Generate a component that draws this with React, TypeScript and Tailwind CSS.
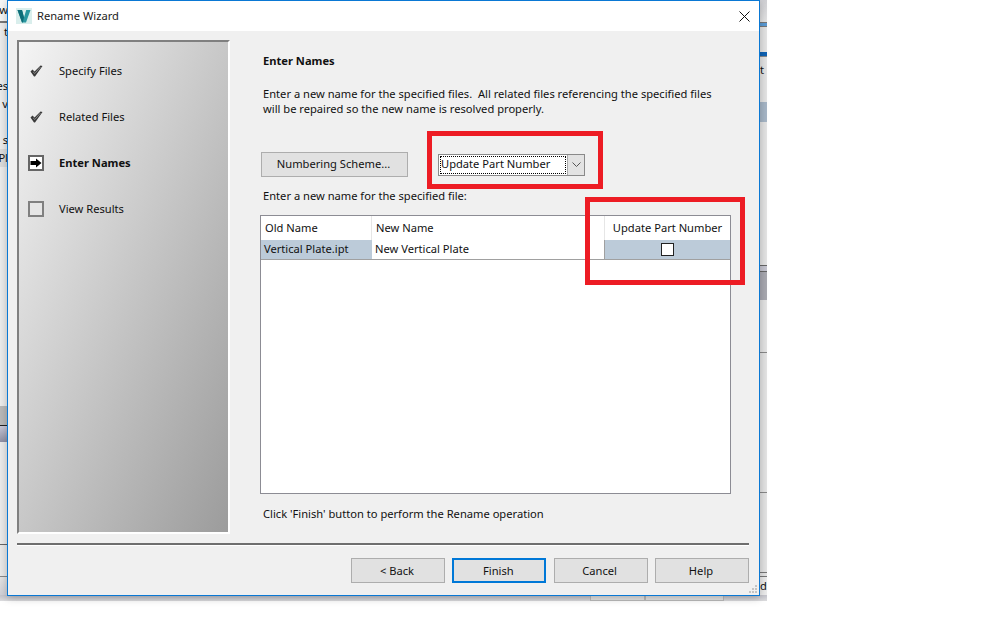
import React from "react";

const font = { fontFamily: '"Noto Sans", "Open Sans", sans-serif' };

function Check() {
  return (
    <svg width="13" height="12" viewBox="0 0 13 12" className="shrink-0">
      <path d="M0.5 6.5 L2.5 4.5 L4.5 6.5 L10.5 0.5 L12.5 1 L5 11.5 L4 11.5 Z" fill="#3a3a3a" />
      <path d="M3 6.8 L4.8 8.5 L10.5 2" fill="none" stroke="#9a9a9a" strokeWidth="0.8" />
    </svg>
  );
}

function Step({ icon, label, bold }: { icon: React.ReactNode; label: string; bold?: boolean }) {
  return (
    <div className="flex items-center h-[46px]">
      <div className="w-[16px] ml-[9px] flex justify-center">{icon}</div>
      <span className={"ml-[15px] text-[#111] " + (bold ? "font-bold" : "")}>{label}</span>
    </div>
  );
}

function Btn({ label, focus }: { label: string; focus?: boolean }) {
  return (
    <div
      className={
        "flex items-center justify-center w-[94px] h-[25px] pr-[2px] pt-[1px] text-[#111] bg-[#e1e1e1] " +
        (focus ? "border-2 border-[#0078d7]" : "border border-[#adadad]")
      }
    >
      {label}
    </div>
  );
}

function Strip({ h, bg, text }: { h: string; bg: string; text?: string }) {
  return (
    <div className={"flex justify-end items-center overflow-hidden whitespace-nowrap shrink-0 " + h + " " + bg}>
      {text}
    </div>
  );
}

function RightStrip({ h, bg, text }: { h: string; bg: string; text?: string }) {
  return (
    <div className={"flex items-center overflow-hidden whitespace-nowrap shrink-0 " + h + " " + bg}>
      {text}
    </div>
  );
}

export default function App() {
  return (
    <div className="relative w-[1008px] h-[630px] bg-white overflow-hidden text-[11.15px] text-[#111]" style={font}>
      {/* Application behind the dialog */}
      <div className="w-[767px] h-[601px] flex flex-col bg-[#e9e9e9]">
        <div className="flex justify-between h-[595px]">
          <div className="w-[8px] flex flex-col">
            <Strip h="h-[21px]" bg="bg-[#f6f6f6]" text="w" />
            <Strip h="h-[2px]" bg="bg-[#777]" />
            <Strip h="h-[18px]" bg="bg-[#ececec]" text="t" />
            <Strip h="h-[36px]" bg="bg-[#ececec]" />
            <Strip h="h-[18px]" bg="bg-[#ececec]" text="es" />
            <Strip h="h-[18px]" bg="bg-[#ececec]" text="v" />
            <Strip h="h-[18px]" bg="bg-[#ececec]" />
            <Strip h="h-[18px]" bg="bg-[#ececec]" text="s" />
            <Strip h="h-[18px]" bg="bg-[#dcdcdc]" text="Pl" />
            <Strip h="h-[239px]" bg="bg-[#ececec]" />
            <Strip h="h-[19px]" bg="bg-[#b9b9b9]" />
            <Strip h="h-[1px]" bg="bg-[#222]" />
            <Strip h="h-[16px]" bg="bg-linear-to-b from-[#c8c8d8] to-[#8f8fa4]" />
            <Strip h="h-[102px]" bg="bg-[#ebebeb]" />
            <Strip h="h-[1px]" bg="bg-[#666]" />
            <Strip h="h-[31px]" bg="bg-[#e9e9e9]" />
            <Strip h="h-[1px]" bg="bg-[#888]" />
            <Strip h="h-[19px]" bg="bg-linear-to-b from-[#e4e4e4] to-[#cfcfd6]" />
          </div>
          <div className="w-[7px] flex flex-col">
            <RightStrip h="h-[22px]" bg="bg-linear-to-b from-[#d0d0d4] to-[#e4e4e4]" />
            <RightStrip h="h-[5px]" bg="bg-[#5b9bd5] border-y border-[#777]" />
            <RightStrip h="h-[25px]" bg="bg-[#e4e4e4]" />
            <RightStrip h="h-[5px]" bg="bg-[#0f62b4] border-b border-[#888]" />
            <RightStrip h="h-[4px]" bg="bg-[#e4e4e4]" />
            <RightStrip h="h-[18px]" bg="bg-[#e4e4e4]" text="t" />
            <RightStrip h="h-[23px]" bg="bg-[#e4e4e4]" />
            <RightStrip h="h-[20px]" bg="bg-[#a6b6c6]" />
            <RightStrip h="h-[143px]" bg="bg-[#e4e4e4]" />
            <RightStrip h="h-[7px]" bg="bg-[#c5c5d0] border-y border-[#666]" />
            <RightStrip h="h-[28px]" bg="bg-[#a8a8b0]" />
            <RightStrip h="h-[52px]" bg="bg-[#e4e4e4]" />
            <RightStrip h="h-[140px]" bg="bg-[#e4e4e4] border-t border-[#888]" />
            <RightStrip h="h-[80px]" bg="bg-[#e4e4e4] border-t border-[#888]" />
            <RightStrip h="h-[5px]" bg="bg-[#e4e4e4] border-y border-[#777]" />
            <RightStrip h="h-[18px]" bg="bg-[#ececec]" text="dr" />
          </div>
        </div>
        <div className="flex h-[6px] pl-[590px] bg-linear-to-b from-[#c4c4cc] to-[#dcdcde]">
          <div className="w-[55px] border border-[#bbb] bg-[#e4e4e4]" />
          <div className="w-[79px] border border-[#bbb] bg-[#e4e4e4]" />
        </div>
      </div>

      {/* Dialog window */}
      <div className="absolute left-[7px] top-0 w-[753px] h-[596px] flex flex-col bg-[#f0f0f0] border border-[#0a78d4] shadow-[0_2px_8px_rgba(0,0,0,0.25)]">
        {/* Title bar */}
        <div className="flex items-center h-[30px] bg-white shrink-0 pl-[8px] pr-[9px]">
          <svg width="16" height="16" viewBox="0 0 16 16" className="shrink-0">
            <rect width="16" height="16" fill="#d9eeec" />
            <path d="M1.5 2 H6 L8 9.5 L10.2 2 H14.5 L10 14.5 H6 Z" fill="#2a97a0" />
            <path d="M6 2 L8 9.5 L6.8 14.5 H6 L1.5 2 Z" fill="#0e6d78" />
          </svg>
          <span className="ml-[5px] text-[#222]">Rename Wizard</span>
          <svg width="11" height="11" viewBox="0 0 11 11" className="ml-auto shrink-0">
            <path d="M0.5 0.5 L10.5 10.5 M10.5 0.5 L0.5 10.5" stroke="#111" strokeWidth="1" />
          </svg>
        </div>

        {/* Main body */}
        <div className="flex pl-[9px] pt-[9px] shrink-0">
          <div className="w-[213px] h-[494px] shrink-0 border-2 border-t-[#808080] border-l-[#808080] border-r-white border-b-white bg-linear-to-br from-[#f5f5f5] to-[#9c9c9c] pt-[6px]">
            <Step icon={<Check />} label="Specify Files" />
            <Step icon={<Check />} label="Related Files" />
            <Step
              bold
              label="Enter Names"
              icon={
                <div className="w-[16px] h-[16px] border-2 border-[#666] bg-white flex items-center justify-center">
                  <svg width="12" height="10" viewBox="0 0 12 10">
                    <path d="M0.5 3 H6 V0.5 L11.5 5 L6 9.5 V7 H0.5 Z" fill="#000" />
                  </svg>
                </div>
              }
            />
            <Step icon={<div className="w-[16px] h-[16px] border-2 border-[#808080] bg-[#e6e6e6]" />} label="View Results" />
          </div>

          <div className="ml-[30px] w-[471px] shrink-0">
            <div className="mt-[12px] h-[18px] leading-[18px] font-bold ml-[3px]">Enter Names</div>
            <div className="mt-[16px] ml-[3px] leading-[15px] whitespace-nowrap">
              <div>Enter a new name for the specified files.&nbsp; All related files referencing the specified files</div>
              <div>will be repaired so the new name is resolved properly.</div>
            </div>
            <div className="flex items-center mt-[36px] ml-[1px]">
              <div className="w-[147px] h-[25px] pr-[2px] flex items-center justify-center bg-[#e1e1e1] border border-[#adadad]">
                Numbering Scheme...
              </div>
              <div className="ml-[30px] w-[147px] h-[22px] flex bg-white border border-[#8a8a8a]">
                <div className="flex-1 m-[1px] pb-[2px] border border-dotted border-black flex items-center leading-none whitespace-nowrap">
                  Update Part Number
                </div>
                <div className="w-[17px] bg-[#e3e3e3] border-l border-[#aaa] flex items-center justify-center">
                  <svg width="9" height="5" viewBox="0 0 9 5">
                    <path d="M0.5 0.5 L4.5 4.5 L8.5 0.5" fill="none" stroke="#555" strokeWidth="1" />
                  </svg>
                </div>
              </div>
            </div>
            <div className="mt-[10px] ml-[3px] h-[18px] leading-[18px]">Enter a new name for the specified file:</div>
            <div className="mt-[10px] w-[471px] h-[279px] bg-white border border-[#8c8c94]">
              <div className="flex h-[24px] items-center bg-white">
                <div className="w-[111px] pl-[4px] border-r border-[#e6e6e6] h-full flex items-center">Old Name</div>
                <div className="w-[233px] pl-[4px] border-r border-[#e6e6e6] h-full flex items-center">New Name</div>
                <div className="flex-1 h-full flex items-center justify-center whitespace-nowrap">Update Part Number</div>
              </div>
              <div className="flex h-[20px] border-b border-[#a0a0a0]">
                <div className="w-[111px] pl-[3px] bg-[#bccbd9] flex items-center">Vertical Plate.ipt</div>
                <div className="w-[233px] pl-[3px] border-r border-[#a0a0a0] flex items-center">New Vertical Plate</div>
                <div className="flex-1 bg-[#bccbd9] flex items-center justify-center">
                  <div className="w-[13px] h-[13px] bg-white border border-[#222]" />
                </div>
              </div>
            </div>
            <div className="mt-[11px] ml-[3px] h-[18px] leading-[18px]">Click 'Finish' button to perform the Rename operation</div>
          </div>
        </div>

        {/* Separator */}
        <div className="mt-[9px] ml-[9px] w-[732px] h-[3px] bg-[#6e6e6e] border-b border-white shrink-0" />

        {/* Buttons */}
        <div className="flex mt-[12px] ml-[343px] w-[398px] justify-between">
          <Btn label="< Back" />
          <Btn label="Finish" focus />
          <Btn label="Cancel" />
          <Btn label="Help" />
        </div>

        {/* Resize grip */}
        <svg width="10" height="10" viewBox="0 0 10 10" className="absolute right-[1px] bottom-[1px]">
          <path d="M7 1h2v2H7zM4 4h2v2H4zM7 4h2v2H7zM1 7h2v2H1zM4 7h2v2H4zM7 7h2v2H7z" fill="#c4c4c4" />
        </svg>
      </div>

      {/* Red annotations */}
      <div className="absolute left-[427px] top-[131px] w-[176px] h-[58px] border-[5px] border-[#ed1c24]" />
      <div className="absolute left-[585px] top-[197px] w-[160px] h-[88px] border-[5px] border-[#ed1c24]" />
    </div>
  );
}
